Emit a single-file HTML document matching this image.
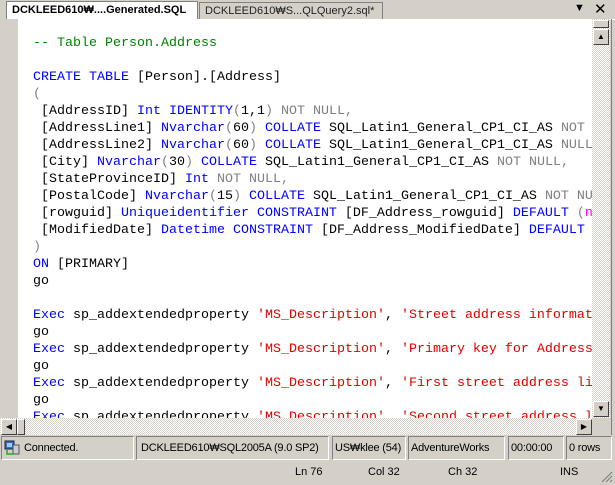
<!DOCTYPE html><html><head><style>
body{margin:0;width:615px;height:485px;background:#d4d0c8;position:relative;overflow:hidden;font-family:"Liberation Sans",sans-serif}
.a{position:absolute}
#tabs{left:0;top:0;width:615px;height:19px;background:#d4d0c8;border-bottom:1px solid #fff}
.tab{position:absolute;top:2px;height:17px;font-size:11px;line-height:16px;padding:0 5px;box-sizing:border-box}
#ed{left:0;top:19px;width:592px;height:399px;background:#fff;overflow:hidden}
#gut{left:0;top:0;width:18px;height:399px;background:#d4d0c8}
pre{position:absolute;left:33px;top:16px;margin:0;font-family:"Liberation Mono",monospace;font-size:13.33px;line-height:17px;color:#000;white-space:pre}
.c{color:#008000}.k{color:#0000ff}.g{color:#808080}.s{color:#e00000}.m{color:#ff00ff}
.track{background-color:#ece9e3;background-image:repeating-conic-gradient(#fff 0 25%,#d4d0c8 0 50%);background-size:2px 2px}
.btn{position:absolute;width:16px;height:16px;background:#d4d0c8;border:1px solid;border-color:#fff #404040 #404040 #fff;box-sizing:border-box;font-size:8px;line-height:14px;text-align:center}
.sb{position:absolute;top:436px;height:24px;border:1px solid;border-color:#808080 #fff #fff #808080;box-sizing:border-box;font-size:11px;line-height:22px;padding-left:4px;white-space:nowrap;overflow:hidden;letter-spacing:-0.2px}
.st{position:absolute;top:466px;font-size:11px}
</style></head><body>
<div id="tabs" class="a">
<div class="tab" style="left:6px;width:192px;background:#fff;border:1px solid #808080;border-bottom:none;font-weight:bold;top:1px;height:19px">DCKLEED610₩....Generated.SQL</div>
<div class="tab" style="left:199px;width:184px;border:1px solid #808080;border-bottom:none;color:#222">DCKLEED610₩S...QLQuery2.sql*</div>
<div class="a" style="left:574px;top:2px;font-size:11px">▼</div>
<div class="a" style="left:594px;top:0px;font-size:15px">✕</div>
</div>
<div id="ed" class="a"><div id="gut" class="a"></div>
<pre><span class="c">-- Table Person.Address</span>

<span class="k">CREATE TABLE</span> [Person].[Address]
<span class="g">(</span>
 [AddressID] <span class="k">Int IDENTITY</span><span class="g">(</span>1,1<span class="g">) NOT NULL,</span>
 [AddressLine1] <span class="k">Nvarchar</span><span class="g">(</span>60<span class="g">)</span> <span class="k">COLLATE</span> SQL_Latin1_General_CP1_CI_AS <span class="g">NOT NULL,</span>
 [AddressLine2] <span class="k">Nvarchar</span><span class="g">(</span>60<span class="g">)</span> <span class="k">COLLATE</span> SQL_Latin1_General_CP1_CI_AS <span class="g">NULL,</span>
 [City] <span class="k">Nvarchar</span><span class="g">(</span>30<span class="g">)</span> <span class="k">COLLATE</span> SQL_Latin1_General_CP1_CI_AS <span class="g">NOT NULL,</span>
 [StateProvinceID] <span class="k">Int</span> <span class="g">NOT NULL,</span>
 [PostalCode] <span class="k">Nvarchar</span><span class="g">(</span>15<span class="g">)</span> <span class="k">COLLATE</span> SQL_Latin1_General_CP1_CI_AS <span class="g">NOT NULL,</span>
 [rowguid] <span class="k">Uniqueidentifier CONSTRAINT</span> [DF_Address_rowguid] <span class="k">DEFAULT</span> <span class="g">(</span><span class="m">newid</span><span class="g">())</span>
 [ModifiedDate] <span class="k">Datetime CONSTRAINT</span> [DF_Address_ModifiedDate] <span class="k">DEFAULT</span> <span class="g">(</span>
<span class="g">)</span>
<span class="k">ON</span> [PRIMARY]
go

<span class="k">Exec</span> sp_addextendedproperty <span class="s">'MS_Description'</span>, <span class="s">'Street address information'</span>
go
<span class="k">Exec</span> sp_addextendedproperty <span class="s">'MS_Description'</span>, <span class="s">'Primary key for Address'</span>
go
<span class="k">Exec</span> sp_addextendedproperty <span class="s">'MS_Description'</span>, <span class="s">'First street address line'</span>
go
<span class="k">Exec</span> sp_addextendedproperty <span class="s">'MS_Description'</span>, <span class="s">'Second street address line'</span></pre>
</div>
<div class="a track" style="left:592px;top:19px;width:18px;height:399px"></div>
<div class="btn" style="left:593px;top:20px;height:8px"></div>
<div class="btn" style="left:593px;top:29px">▲</div>
<div class="btn" style="left:593px;top:401px">▼</div>
<div class="a" style="left:611px;top:19px;width:1px;height:416px;background:#808080"></div>
<div class="a track" style="left:0;top:418px;width:592px;height:17px"></div>
<div class="btn" style="left:1px;top:419px">◀</div>
<div class="btn" style="left:17px;top:419px;width:8px"></div>
<div class="btn" style="left:576px;top:419px">▶</div>
<div class="sb" style="left:1px;width:133px;padding-left:22px">Connected.</div>
<svg class="a" style="left:4px;top:440px" width="16" height="16"><rect x="1" y="1" width="9" height="8" fill="#3a6ec8" stroke="#223"/><rect x="3" y="3" width="5" height="4" fill="#9cf"/><rect x="9" y="5" width="6" height="9" fill="#ccc" stroke="#555"/><path d="M3 10v4h6" stroke="#2a2" fill="none" stroke-width="1.5"/></svg>
<div class="sb" style="left:136px;width:193px">DCKLEED610₩SQL2005A (9.0 SP2)</div>
<div class="sb" style="left:332px;width:74px;padding-left:2px">US₩klee (54)</div>
<div class="sb" style="left:408px;width:97px;padding-left:2px">AdventureWorks</div>
<div class="sb" style="left:508px;width:56px;padding-left:2px">00:00:00</div>
<div class="sb" style="left:566px;width:46px;padding-left:2px">0 rows</div>
<div class="st" style="left:295px">Ln 76</div>
<div class="st" style="left:368px">Col 32</div>
<div class="st" style="left:448px">Ch 32</div>
<div class="st" style="left:560px">INS</div>
<svg class="a" style="left:601px;top:471px" width="12" height="12"><path d="M11 1L1 11M11 5L5 11M11 9L9 11" stroke="#808080" stroke-width="1.2"/></svg>
</body></html>
